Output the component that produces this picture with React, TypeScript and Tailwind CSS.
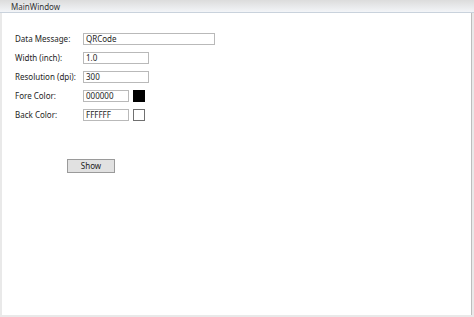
const rows = [
    { label: "Data Message:", value: "QRCode", width: "w-[132px]" },
    { label: "Width (inch):", value: "1.0", width: "w-[66px]" },
    { label: "Resolution (dpi):", value: "300", width: "w-[66px]" },
];

const colorRows = [
    { label: "Fore Color:", value: "000000", swatch: "bg-black border-black" },
    { label: "Back Color:", value: "FFFFFF", swatch: "bg-white border-[#707070]" },
];

const App = () => {
    return (
        <div
            className="w-[474px] h-[317px] flex flex-col bg-[#e9e9e9] text-[#1e1e1e]"
            style={{ fontFamily: '"Noto Sans", "Open Sans", sans-serif' }}
        >
            {/* title bar */}
            <div className="h-[13px] shrink-0 flex items-end bg-gradient-to-b from-[#dcdcdc] to-[#f3f5f8] border-b border-[#c9d2dc]">
                <span className="pl-[11px] text-[8px] leading-[11px] text-[#333]">MainWindow</span>
            </div>

            <div className="flex-1 flex items-start bg-white ml-[2px] mr-[2px] mb-[2px] border-r border-[#bdbdbd]">
                <div className="w-[220px] shrink-0 flex flex-col pt-[20px] pl-[13px]">
                    {rows.map((r) => (
                        <div key={r.label} className="flex items-center h-[12px] mb-[7px]">
                            <span className="w-[68px] shrink-0 text-[8px] leading-none">{r.label}</span>
                            <div className={`${r.width} shrink-0 h-[12px] border border-[#b9b9b9] flex items-center px-[2px] text-[8px] leading-none`}>
                                {r.value}
                            </div>
                        </div>
                    ))}
                    {colorRows.map((r) => (
                        <div key={r.label} className="flex items-center h-[12px] mb-[7px]">
                            <span className="w-[68px] shrink-0 text-[8px] leading-none">{r.label}</span>
                            <div className="w-[46px] shrink-0 h-[12px] border border-[#b9b9b9] flex items-center px-[2px] text-[8px] leading-none">
                                {r.value}
                            </div>
                            <div className={`ml-[4px] shrink-0 w-[12px] h-[12px] border ${r.swatch}`} />
                        </div>
                    ))}
                    <div className="flex mt-[31px] pl-[52px]">
                        <button className="w-[48px] h-[14px] border border-[#9a9a9a] bg-[#e1e1e1] text-[8px] leading-none text-[#222]">
                            Show
                        </button>
                    </div>
                </div>
            </div>
        </div>
    );
};

export default App;
